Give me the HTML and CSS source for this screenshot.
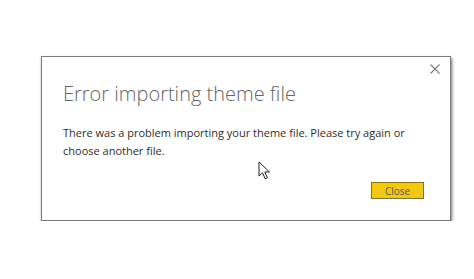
FILE: index.html
```
<!DOCTYPE html>
<html lang="en">
<head>
    <meta charset="UTF-8">
    <meta name="viewport" content="width=device-width, initial-scale=1.0">
    <title>Error importing theme file</title>
    <link rel="stylesheet" href="styles.css">
</head>
<body>

    <div class="dialog">
        <div class="dialog-top">
            <svg class="close-x" width="10" height="10" viewBox="0 0 10 10">
                <path d="M0.5 0.5 L9.5 9.5 M9.5 0.5 L0.5 9.5" stroke="#7a7a7a" stroke-width="1.1"/>
            </svg>
        </div>

        <h1 class="title">Error importing theme file</h1>

        <p class="message">There was a problem importing your theme file. Please try again or choose another file.</p>

        <div class="actions">
            <button class="close-btn">Close</button>
        </div>

        <!-- cursor -->
        <svg class="cursor" width="13" height="19" viewBox="0 0 13 19">
            <path d="M1 1 L1 15 L4.5 11.8 L7.2 17.8 L9.4 16.8 L6.8 11 L11.5 11 Z" fill="#fff" stroke="#222" stroke-width="1" stroke-linejoin="round"/>
        </svg>
    </div>

</body>
</html>
```

FILE: styles.css
```
body {
    font-family: 'Open Sans', sans-serif;
    background-color: #fff;
    margin: 0;
    padding: 0;
}

.dialog {
    position: relative;
    box-sizing: border-box;
    width: 410px;
    height: 165px;
    margin: 56px 0 0 41px;
    padding: 0 26px 0 21px;
    border: 1px solid #7c7c7c;
    background-color: #fff;
    box-shadow: 1px 2px 3px rgba(0, 0, 0, 0.55);
    display: flex;
    flex-direction: column;
}

.dialog-top {
    display: flex;
    justify-content: flex-end;
    height: 10px;
    padding-top: 7px;
    margin-right: -16px;
}

.title {
    margin: 6px 0 0;
    font-size: 20px;
    font-weight: 300;
    color: #666;
    line-height: 28px;
}

.message {
    margin: 16px 0 0;
    font-size: 11px;
    line-height: 18px;
    color: #2e2e2e;
}

.actions {
    display: flex;
    justify-content: flex-end;
    padding-top: 22px;
}

.close-btn {
    width: 53px;
    height: 17px;
    padding: 0;
    background-color: #f2c811;
    border: 1px solid #857224;
    font-family: 'Open Sans', sans-serif;
    font-size: 10px;
    line-height: 14px;
    color: #5a5a5a;
}

.cursor {
    position: absolute;
    left: 216px;
    top: 104px;
}
```
